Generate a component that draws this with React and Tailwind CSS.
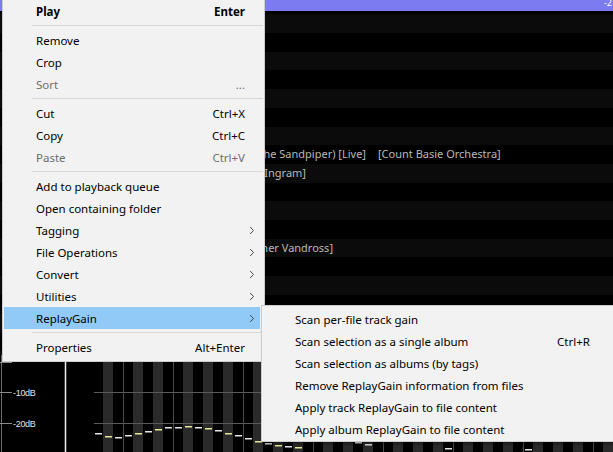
import React from "react";

const FONT = { fontFamily: '"Noto Sans", "Open Sans", sans-serif' };

const menuItems = [
  { label: "Play", sc: "Enter", bold: true },
  "sep",
  { label: "Remove" },
  { label: "Crop" },
  { label: "Sort", sc: "...", disabled: true },
  "sep",
  { label: "Cut", sc: "Ctrl+X" },
  { label: "Copy", sc: "Ctrl+C" },
  { label: "Paste", sc: "Ctrl+V", disabled: true },
  "sep",
  { label: "Add to playback queue" },
  { label: "Open containing folder" },
  { label: "Tagging", sub: true },
  { label: "File Operations", sub: true },
  { label: "Convert", sub: true },
  { label: "Utilities", sub: true },
  { label: "ReplayGain", sub: true, active: true },
  "sep",
  { label: "Properties", sc: "Alt+Enter" },
];

const subItems = [
  { label: "Scan per-file track gain" },
  { label: "Scan selection as a single album", sc: "Ctrl+R" },
  { label: "Scan selection as albums (by tags)" },
  { label: "Remove ReplayGain information from files" },
  { label: "Apply track ReplayGain to file content" },
  { label: "Apply album ReplayGain to file content" },
];

function Chevron() {
  return (
    <svg width="6" height="9" viewBox="0 0 6 9" className="block">
      <path d="M1.2 1 L4.5 4.5 L1.2 8" fill="none" stroke="#4a4a4a" strokeWidth="1" />
    </svg>
  );
}

function Menu() {
  return (
    <div
      className="absolute left-[2px] top-0 z-10 w-[263px] border-x border-b border-[#cccccc] bg-[#f2f2f2] pb-[3px] pl-[1px] text-[11.5px] text-black"
      style={FONT}
    >
      {menuItems.map((it, i) =>
        it === "sep" ? (
          <div key={i} className="flex h-[7px] items-center">
            <div className="ml-[28px] mr-[1px] h-px flex-1 bg-[#d7d7d7]" />
          </div>
        ) : (
          <div
            key={i}
            className={
              "mr-[4px] flex h-[22px] items-center pl-[32px] pt-px " +
              (it.active ? "bg-[#91c9f7] " : "") +
              (it.disabled ? "text-[#6d6d6d] " : "") +
              (it.bold ? "font-bold " : "")
            }
          >
            <span className="whitespace-nowrap">{it.label}</span>
            {it.sc && <span className="ml-auto mr-[15px] whitespace-nowrap">{it.sc}</span>}
            {it.sub && (
              <span className="ml-auto mr-[5px]">
                <Chevron />
              </span>
            )}
          </div>
        )
      )}
    </div>
  );
}

function SubMenu() {
  return (
    <div
      className="absolute left-[261px] top-[305px] z-20 w-[360px] border border-[#cccccc] bg-[#f2f2f2] pb-[1px] pt-[2px] text-[11.5px] text-black shadow-[2px_2px_3px_rgba(0,0,0,0.35)]"
      style={FONT}
    >
      {subItems.map((it, i) => (
        <div key={i} className="flex h-[22px] items-center pl-[33px] pt-px">
          <span className="w-[262px] whitespace-nowrap">{it.label}</span>
          {it.sc && <span className="whitespace-nowrap">{it.sc}</span>}
        </div>
      ))}
    </div>
  );
}

function RightCol({ w, children }) {
  return (
    <div className={"ml-[265px] flex shrink-0 justify-end overflow-hidden " + w}>
      <span className="shrink-0 whitespace-nowrap">{children}</span>
    </div>
  );
}

const rowTexts = {
  8: (
    <>
      <RightCol w="w-[101px]">The Shadow of Your Smile (Love Theme from The Sandpiper) [Live]</RightCol>
      <span className="ml-[12px] whitespace-nowrap">[Count Basie Orchestra]</span>
    </>
  ),
  9: <RightCol w="w-[41px]">One Hundred Ways [James Ingram]</RightCol>,
  13: <RightCol w="w-[68px]">Never Too Much [Luther Vandross]</RightCol>,
};

function Playlist() {
  const rows = Array.from({ length: 20 }, (_, i) => i);
  return (
    <div className="h-[344px] overflow-hidden bg-black">
      <div className="-mt-[15.3px]">
        {rows.map((k) => (
          <div
            key={k}
            className={
              "flex h-[18.7px] items-center text-[11px] text-[#b9b9b9] " +
              (k % 2 === 1 ? "bg-[#0b0b0b]" : "bg-black")
            }
            style={FONT}
          >
            {rowTexts[k] || null}
          </div>
        ))}
      </div>
    </div>
  );
}

function Spectrum() {
  const stripes = [103, 133, 153, 183, 203, 223, 253, 273, 293, 323, 343, 363, 393, 413, 433, 463, 483, 503, 533, 553, 573, 603];
  const vlines = [123, 173, 243, 313, 383, 453, 523, 593];
  const peaks = [
    [95, 78, false], [105, 81, true], [115, 82, false], [125, 80, false], [135, 78, true],
    [145, 76, false], [155, 74, true], [165, 72, false], [175, 72, false], [185, 71, true],
    [195, 72, false], [205, 73, true], [215, 75, false], [225, 78, true], [235, 80, false],
    [245, 83, false], [255, 86, true], [265, 88, false], [275, 90, true], [285, 91, false],
    [295, 92, true], [355, 87, false], [365, 89, false], [445, 93, false], [525, 94, false],
  ];
  return (
    <div className="h-[97px] bg-black">
      <svg width="613" height="97" viewBox="0 0 613 97" className="block">
        {stripes.map((x) => (
          <rect key={x} x={x} y="0" width="10" height="97" fill="#2a2a2a" />
        ))}
        {vlines.map((x) => (
          <line key={x} x1={x + 0.5} y1="0" x2={x + 0.5} y2="97" stroke="#4a4a4a" strokeWidth="1" />
        ))}
        <line x1="94" y1="37.5" x2="613" y2="37.5" stroke="#5a5a5a" strokeWidth="1" />
        <line x1="94" y1="68.5" x2="613" y2="68.5" stroke="#5a5a5a" strokeWidth="1" />
        <line x1="1.5" y1="0" x2="1.5" y2="97" stroke="#6a6a6a" strokeWidth="1" />
        <line x1="0" y1="7.5" x2="12" y2="7.5" stroke="#8a8a8a" strokeWidth="1" />
        <line x1="0" y1="37.5" x2="12" y2="37.5" stroke="#8a8a8a" strokeWidth="1" />
        <line x1="0" y1="68.5" x2="12" y2="68.5" stroke="#8a8a8a" strokeWidth="1" />
        <text x="13" y="41" fontSize="9" fill="#e6e6e6" fontFamily="Liberation Sans, sans-serif" letterSpacing="-0.3">-10dB</text>
        <text x="13" y="72" fontSize="9" fill="#e6e6e6" fontFamily="Liberation Sans, sans-serif" letterSpacing="-0.3">-20dB</text>
        <line x1="65.5" y1="0" x2="65.5" y2="97" stroke="#f0f0f0" strokeWidth="1.5" />
        {peaks.map(([x, y, yel]) => (
          <rect key={x} x={x} y={y} width="7" height="1.5" fill={yel ? "#e8e89a" : "#e6e6e6"} />
        ))}
      </svg>
    </div>
  );
}

export default function App() {
  return (
    <div className="relative h-[452px] w-[613px] overflow-hidden bg-black">
      <div className="flex h-[11px] bg-[#7c7cf0]">
        <div className="ml-auto pr-[1px] text-[9px] leading-[6px] text-white" style={FONT}>
          -2
        </div>
      </div>
      <Playlist />
      <Spectrum />
      <Menu />
      <SubMenu />
    </div>
  );
}
